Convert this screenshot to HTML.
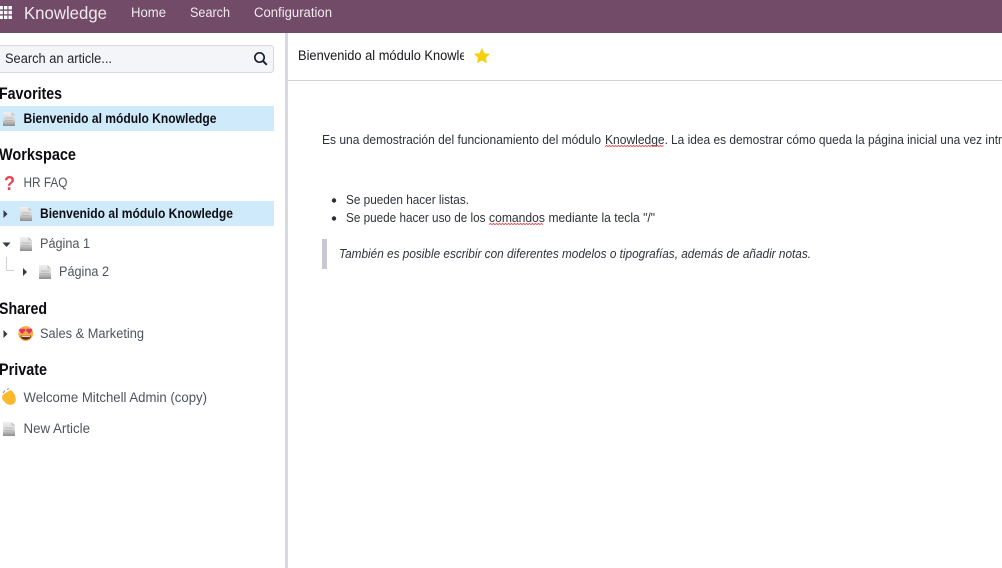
<!DOCTYPE html>
<html lang="es">
<head>
<meta charset="utf-8">
<title>Knowledge</title>
<style>
html,body{margin:0;padding:0;background:#fff;width:1002px;height:568px;overflow:hidden}
svg{display:block}
text{font-family:"Liberation Sans",Arial,sans-serif;white-space:pre}
.nav{fill:#f0e9ee;font-size:13.500px}
.h{fill:#0c0c10;font-size:16.500px;font-weight:bold}
.i{fill:#4f535d;font-size:13.500px}
.b{fill:#0e0e12;font-size:13.500px;font-weight:bold}
.p{fill:#2e3239;font-size:13px}
</style>
</head>
<body>
<svg width="1002" height="568" viewBox="0 0 1002 568" xmlns="http://www.w3.org/2000/svg">
<defs>
<linearGradient id="doc" x1="0" y1="0" x2="0" y2="1"><stop offset="0" stop-color="#f0f0f0"/><stop offset=".55" stop-color="#d6d6d6"/><stop offset="1" stop-color="#8c8c8c"/></linearGradient>
<g id="d"><path d="M0 0H8.500L12 3.500V14H0Z" fill="url(#doc)"/><path d="M2 6H10M2 8.500H10M2 11H10" stroke="#b0b0b0" stroke-width=".7"/><path d="M8.500 0V3.500H12Z" fill="#c4c4c4"/></g>
<path id="r" d="M0 0L4 4L0 8Z" fill="#353a44"/>
<clipPath id="tc"><rect x="298" y="40" width="166" height="30"/></clipPath>
</defs>

<!-- navbar -->
<rect width="1002" height="33" fill="#714b67"/>
<g fill="#fff"><rect x="-0.500" y="6" width="3.400" height="3.400"/><rect x="4" y="6" width="3.400" height="3.400"/><rect x="8.500" y="6" width="3.400" height="3.400"/><rect x="-0.500" y="10.800" width="3.400" height="3.400"/><rect x="4" y="10.800" width="3.400" height="3.400"/><rect x="8.500" y="10.800" width="3.400" height="3.400"/><rect x="-0.500" y="15.600" width="3.400" height="3.400"/><rect x="4" y="15.600" width="3.400" height="3.400"/><rect x="8.500" y="15.600" width="3.400" height="3.400"/></g>
<text x="24" y="19" fill="#f0e9ee" font-size="17.500" textLength="83" lengthAdjust="spacingAndGlyphs">Knowledge</text>
<text class="nav" x="131" y="17" textLength="35" lengthAdjust="spacingAndGlyphs">Home</text>
<text class="nav" x="190" y="17" textLength="40" lengthAdjust="spacingAndGlyphs">Search</text>
<text class="nav" x="254" y="17" textLength="78" lengthAdjust="spacingAndGlyphs">Configuration</text>

<!-- search -->
<rect x="-3" y="45.500" width="276.500" height="27" rx="3" fill="#f4f5f9" stroke="#d8d8e0"/>
<text x="5" y="63" fill="#22252b" font-size="13.500" textLength="107" lengthAdjust="spacingAndGlyphs">Search an article...</text>
<circle cx="259.500" cy="57.500" r="4.700" fill="none" stroke="#16202c" stroke-width="1.700"/>
<path d="M262.800 60.800L266.800 64.800" stroke="#16202c" stroke-width="2"/>

<!-- sidebar -->
<text class="h" x="-1" y="99" textLength="63" lengthAdjust="spacingAndGlyphs">Favorites</text>
<rect y="106" width="274" height="25" fill="#cfeafa"/>
<use href="#d" x="3" y="112"/>
<text class="b" x="23.500" y="123" textLength="193" lengthAdjust="spacingAndGlyphs">Bienvenido al módulo Knowledge</text>

<text class="h" x="-1" y="160" textLength="77" lengthAdjust="spacingAndGlyphs">Workspace</text>
<text x="4" y="190" fill="#e8414f" font-size="20" font-weight="bold" textLength="11" lengthAdjust="spacingAndGlyphs">?</text>
<text class="i" x="23.500" y="187" textLength="44" lengthAdjust="spacingAndGlyphs">HR FAQ</text>

<rect y="201" width="274" height="25" fill="#cfeafa"/>
<use href="#r" x="3.500" y="210"/>
<use href="#d" x="20" y="207"/>
<text class="b" x="40" y="218" textLength="193" lengthAdjust="spacingAndGlyphs">Bienvenido al módulo Knowledge</text>

<path d="M2.500 242.500H10.500L6.500 247Z" fill="#353a44"/>
<use href="#d" x="20" y="237"/>
<text class="i" x="40" y="248" textLength="50" lengthAdjust="spacingAndGlyphs">Página 1</text>

<path d="M6.500 257V270.500H14" fill="none" stroke="#d0d0d6"/>
<use href="#r" x="23" y="268"/>
<use href="#d" x="39" y="265"/>
<text class="i" x="59" y="276" textLength="50" lengthAdjust="spacingAndGlyphs">Página 2</text>

<text class="h" x="-1" y="314" textLength="48" lengthAdjust="spacingAndGlyphs">Shared</text>
<use href="#r" x="3.500" y="330"/>
<circle cx="25.700" cy="333.500" r="7.400" fill="#f8ae3c"/>
<path d="M20.500 335.500H31C31 338.500 28.500 339.800 25.700 339.800S20.500 338.500 20.500 335.500Z" fill="#6a3320"/>
<path d="M21.500 335.800H30V336.800H21.500Z" fill="#fff"/>
<path d="M22.200 334L19.300 331C18.500 329 21 327.800 22.200 329.300C23.400 327.800 25.900 329 25.100 331Z" fill="#e6306b"/>
<path d="M29.200 334L26.300 331C25.500 329 28 327.800 29.200 329.300C30.400 327.800 32.900 329 32.100 331Z" fill="#e6306b"/>

<text class="i" x="40" y="338" textLength="104" lengthAdjust="spacingAndGlyphs">Sales &amp; Marketing</text>

<text class="h" x="-1" y="375" textLength="48" lengthAdjust="spacingAndGlyphs">Private</text>
<path d="M4 394L7 392L9 391L11 390L13 392L15 395L16 400L14 404L10 405L6 403.500L2.500 399.500L2 396Z" fill="#fdb92c"/>
<path d="M3 393L5 390.500M7 389.500L9 388.500" stroke="#9a9a9a" stroke-width="1.100"/>
<text class="i" x="23.500" y="402" textLength="183.500" lengthAdjust="spacingAndGlyphs">Welcome Mitchell Admin (copy)</text>

<use href="#d" x="3" y="422"/>
<text class="i" x="23.500" y="433" textLength="66.500" lengthAdjust="spacingAndGlyphs">New Article</text>

<!-- divider -->
<rect x="285" y="33" width="3" height="535" fill="#d8d8e0"/>
<rect x="288" y="80" width="714" height="1" fill="#d0d0d8"/>

<!-- title -->
<text clip-path="url(#tc)" x="298" y="60" fill="#14161a" font-size="13.500" textLength="190" lengthAdjust="spacingAndGlyphs">Bienvenido al módulo Knowledge</text>
<path d="M482 48L484.400 53.200L490 53.900L485.900 57.700L487 63.300L482 60.500L477 63.300L478.100 57.700L474 53.900L479.600 53.200Z" fill="#f6cf0a"/>

<!-- content -->
<text class="p" x="322" y="144" textLength="279" lengthAdjust="spacingAndGlyphs">Es una demostración del funcionamiento del módulo</text>
<text class="p" x="605" y="144" textLength="63" lengthAdjust="spacingAndGlyphs">Knowledge.</text>
<text class="p" x="671" y="144" textLength="331" lengthAdjust="spacingAndGlyphs">La idea es demostrar cómo queda la página inicial una vez intr</text>
<path d="M605 146.500l1.500-1 1.500 1 1.500-1 1.500 1 1.500-1 1.500 1 1.500-1 1.500 1 1.500-1 1.500 1 1.500-1 1.500 1 1.500-1 1.500 1 1.500-1 1.500 1 1.500-1 1.500 1 1.500-1 1.500 1 1.500-1 1.500 1 1.500-1 1.500 1 1.500-1 1.500 1 1.500-1 1.500 1 1.500-1 1.500 1 1.500-1 1.500 1 1.500-1 1.500 1 1.500-1 1.500 1 1.500-1 1.500 1 1.500-1" fill="none" stroke="#e0363c" stroke-width=".8"/>

<circle cx="334" cy="200.500" r="2.200" fill="#2a2d33"/>
<text class="p" x="346" y="204" textLength="123" lengthAdjust="spacingAndGlyphs">Se pueden hacer listas.</text>
<circle cx="334" cy="218.500" r="2.200" fill="#2a2d33"/>
<text class="p" x="346" y="222" textLength="139.500" lengthAdjust="spacingAndGlyphs">Se puede hacer uso de los</text>
<text class="p" x="489" y="222" textLength="56" lengthAdjust="spacingAndGlyphs">comandos</text>
<text class="p" x="548.500" y="222" textLength="106.500" lengthAdjust="spacingAndGlyphs">mediante la tecla "/"</text>
<path d="M489 224.500l1.500-1 1.500 1 1.500-1 1.500 1 1.500-1 1.500 1 1.500-1 1.500 1 1.500-1 1.500 1 1.500-1 1.500 1 1.500-1 1.500 1 1.500-1 1.500 1 1.500-1 1.500 1 1.500-1 1.500 1 1.500-1 1.500 1 1.500-1 1.500 1 1.500-1 1.500 1 1.500-1 1.500 1 1.500-1 1.500 1 1.500-1 1.500 1 1.500-1 1.500 1 1.500-1 1.500 1" fill="none" stroke="#e0363c" stroke-width=".8"/>

<rect x="322" y="239" width="5" height="30" fill="#c9c9d3"/>
<text class="p" x="339" y="258" font-style="italic" textLength="472" lengthAdjust="spacingAndGlyphs">También es posible escribir con diferentes modelos o tipografías, además de añadir notas.</text>
</svg>
</body>
</html>
